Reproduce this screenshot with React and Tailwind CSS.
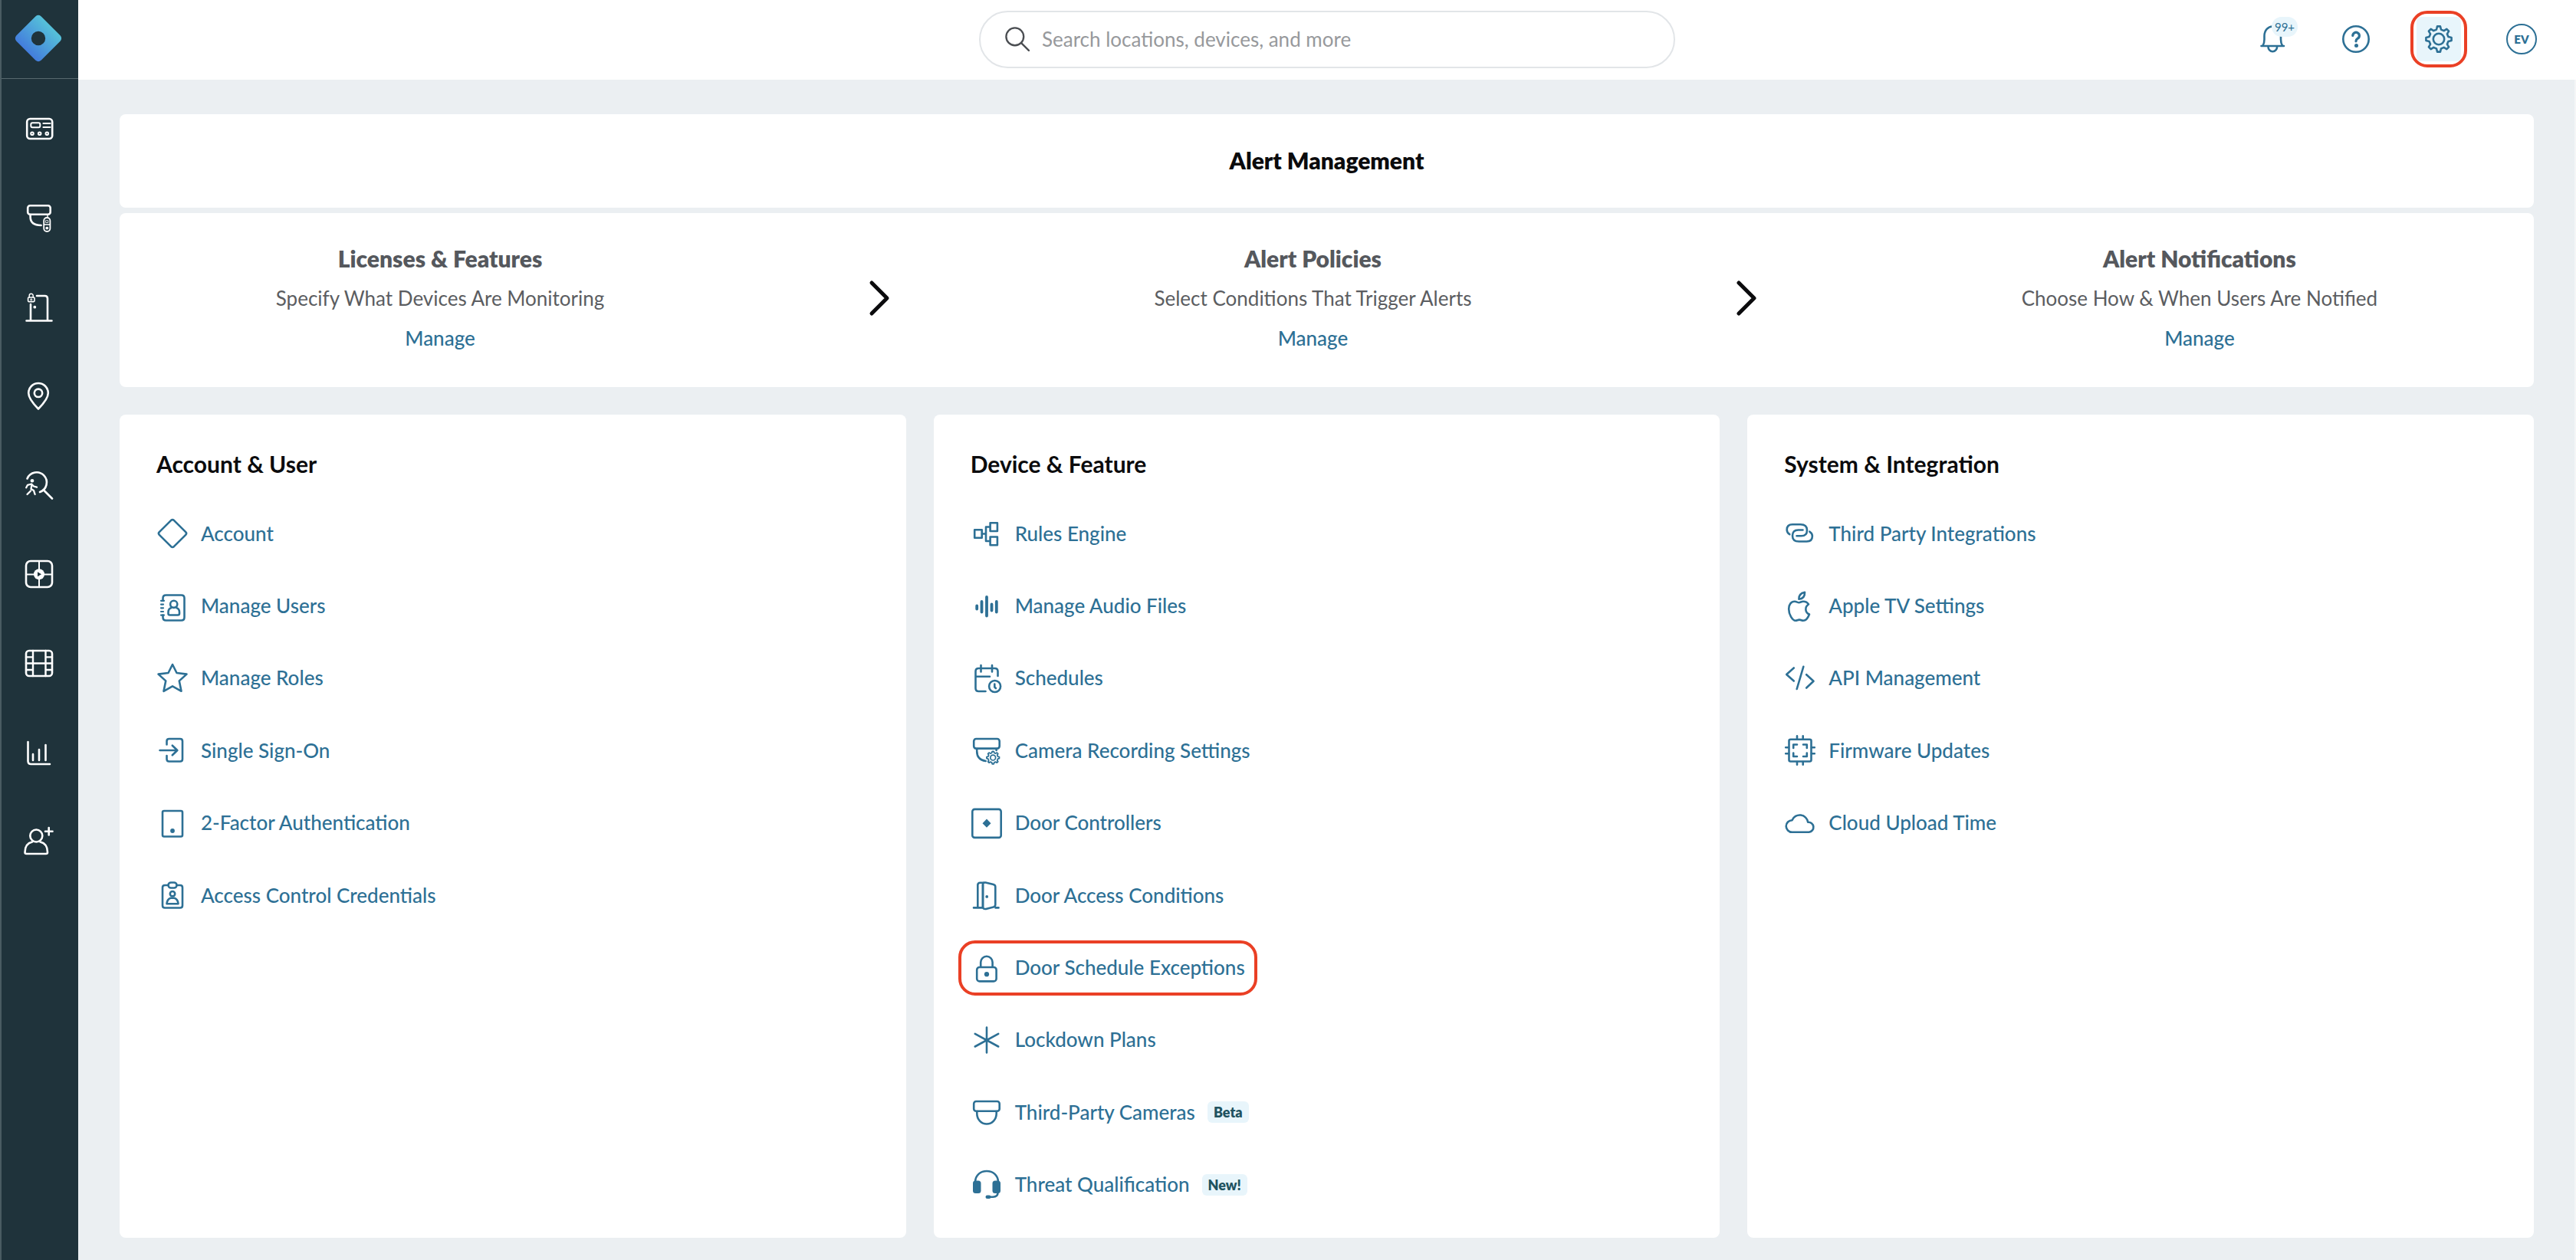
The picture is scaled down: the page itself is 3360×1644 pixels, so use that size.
import clsx from 'clsx'

// Closed outline of a toothed wheel centred on cx, cy
const gearPath = (cx, cy, outer, inner, teeth = 8) => {
  const step = 360 / teeth
  const points = []
  for (let i = 0; i < teeth; i++) {
    const mid = i * step - 90
    const corners = [
      [mid - step * 0.3, inner],
      [mid - step * 0.15, outer],
      [mid + step * 0.15, outer],
      [mid + step * 0.3, inner],
    ]
    corners.forEach(([deg, r]) => {
      const rad = (deg * Math.PI) / 180
      points.push(`${(cx + r * Math.cos(rad)).toFixed(2)} ${(cy + r * Math.sin(rad)).toFixed(2)}`)
    })
  }
  return `M${points.join('L')}Z`
}

const icons = {
  // sidebar
  dashboard: (
    <>
      <rect x="4.2" y="7" width="33" height="26" rx="4" />
      <rect x="9.3" y="12.3" width="12" height="6" rx="2" strokeWidth="2" />
      <path d="M25.5 13h9M25.5 18h9" strokeWidth="2.2" />
      <circle cx="11" cy="26.3" r="1.8" strokeWidth="2" />
      <circle cx="20.7" cy="26.3" r="1.8" strokeWidth="2" />
      <circle cx="30.3" cy="26.3" r="1.8" strokeWidth="2" />
    </>
  ),
  camerasNav: (
    <>
      <rect x="5.2" y="4.2" width="29.5" height="11.6" rx="3" />
      <path d="M8.6 16v3c0 7 5 11 14 11" />
      <rect x="26.2" y="20" width="8.2" height="18" rx="4" strokeWidth="1.8" />
      <path d="M26.5 29h7.6M31 16.5v2.5" strokeWidth="1.4" />
      <rect x="29" y="23.7" width="2.8" height="2.8" strokeWidth="0.8" />
      <circle cx="30.3" cy="33.6" r="1.9" fill="currentColor" stroke="none" />
    </>
  ),
  doorsNav: (
    <>
      <rect x="5.6" y="8" width="8.4" height="5.6" rx="1" strokeWidth="1.6" />
      <path d="M7.2 8V5.7a2.3 2.3 0 0 1 5 0V8" strokeWidth="1.5" />
      <path d="M9.8 9.6v2.6M8.5 10.9h2.6" strokeWidth="1" />
      <path d="M17 6h10.5q3.5 0 3.5 3.5V38.5M9 17v21.5M3.5 38.5h33" />
      <circle cx="14.3" cy="20.7" r="1.9" fill="currentColor" stroke="none" />
    </>
  ),
  pin: (
    <>
      <path d="M19 37.5C14.5 33 6.2 24.5 6.2 16.8a12.8 12.8 0 0 1 25.6 0C31.8 24.5 23.5 33 19 37.5Z" />
      <circle cx="19" cy="16.8" r="5.2" />
    </>
  ),
  personSearch: (
    <>
      <path d="M4.5 12.5a13.2 13.2 0 1 1 16.5 17.5q3-.5 5-3.5" />
      <path d="M26 27.5L37 38.5" />
      <circle cx="11" cy="15.2" r="2.3" fill="currentColor" stroke="none" />
      <path d="M10.5 20L9.5 26M3.2 24.2L5 20.8L10 19.5L13 22.5L17 23.6M9.5 26L13 28L14.6 33M9 28.5L4.5 33" strokeWidth="2.3" />
    </>
  ),
  videoGrid: (
    <>
      <rect x="3" y="4" width="34" height="34" rx="6" />
      <path d="M20 4v34M3 21.5h34" strokeWidth="2" />
      <circle cx="20" cy="21.2" r="7" fill="currentColor" stroke="none" />
      <path d="M18 18.2v6l5-3Z" fill="#1f333b" stroke="none" />
    </>
  ),
  film: (
    <>
      <rect x="3" y="5" width="34" height="33" rx="4" />
      <path d="M12 5v33M28.5 5v33M3 21.5h34M3 13.4h9M3 30h9M28.5 13.4H37M28.5 30H37" strokeWidth="2.4" />
    </>
  ),
  chart: <path d="M5.5 8v25q0 4 4 4h24.5M12 24v8M20 18v14M28.5 12v20" />,
  addUser: (
    <>
      <circle cx="16.3" cy="14.5" r="8" />
      <path d="M11 22.6C5 24 1.5 28.5 1.5 36q0 2 2 2h25.5q2 0 2-2c0-7.5-3.5-12-9.5-13.4M32.7 4v9.5M28 8.8h9.5" />
    </>
  ),

  // header
  search: (
    <>
      <circle cx="12" cy="12" r="10.7" />
      <path d="M19.8 19.8L29 29" />
    </>
  ),
  bell: (
    <>
      <path d="M4.5 29h29.5M6.5 28.5q2-3 2-8v-4.5C8.5 8.5 13.5 3.5 19.3 3.5S30 8.5 30 16v4.5q0 5 2 8" />
      <path d="M13.5 30a5.8 6.3 0 0 0 11.6 0" />
    </>
  ),
  help: (
    <>
      <circle cx="20" cy="20" r="16.7" />
      <path d="M15.8 15.5a4.3 4.3 0 1 1 6.5 3.7q-2.3 1.5-2.3 3.6" strokeWidth="3.2" />
      <circle cx="20.5" cy="28.6" r="2.5" fill="currentColor" stroke="none" />
    </>
  ),
  gear: (
    <>
      <path d={gearPath(20, 20, 16.7, 12.8)} />
      <circle cx="20" cy="20" r="7.2" />
    </>
  ),

  // account & user
  diamond: <path d="M19.2 2.8q1.8-1.5 3.6 0L38.2 18.2q1.8 1.8 0 3.6L22.8 37.2q-1.8 1.5-3.6 0L3.8 21.8q-1.8-1.8 0-3.6Z" />,
  userBook: (
    <>
      <path d="M8.5 12.5V9.5q0-4 4-4H32.5q4 0 4 4V34.5q0 4-4 4H12.5q-4 0-4-4V31.5" />
      <path d="M6 12.8h4M6 17.6h3M6 22.3h3M6 27h3M6 31.6h4" strokeWidth="2.2" />
      <circle cx="22.7" cy="17.3" r="4.6" />
      <path d="M19 22.3q-3.5 1.2-3.5 5.5v1.7q0 2 2 2h10.5q2 0 2-2V27.8q0-4.3-3.5-5.5" />
    </>
  ),
  star: <path d="M21 2L26.5 13L39.5 14.6L29.8 23.4L32.5 36.8L21 30.4L9.5 36.8L12.2 23.4L2.5 14.6L15.5 13Z" />,
  signIn: <path d="M13.5 12.5V8q0-3 3-3H31q3 0 3 3V31.5q0 3-3 3H16.5q-3 0-3-3V27M4.5 20H27M20.8 13.7L27.3 20L20.8 26.3" />,
  tablet: (
    <>
      <rect x="8" y="4" width="26" height="33.5" rx="2" />
      <circle cx="21" cy="30" r="2.9" fill="currentColor" stroke="none" />
    </>
  ),
  idBadge: (
    <>
      <path d="M14.5 7H11q-3 0-3 3V33.5q0 3 3 3H31q3 0 3-3V10q0-3-3-3H27.5" />
      <rect x="15.5" y="3.5" width="11" height="7" rx="3.5" />
      <circle cx="21" cy="18.2" r="3.2" />
      <path d="M13.5 31.2q.5-6 5-7.5h5q4.5 1.5 5 7.5Z" />
    </>
  ),

  // device & feature
  rules: (
    <>
      <rect x="5.2" y="15.2" width="9.5" height="10.5" />
      <rect x="25.6" y="6.2" width="9.3" height="10.8" />
      <rect x="25.6" y="24.5" width="9.3" height="10.8" />
      <path d="M15 20.5h5M25 11.5h-5v18.5h5" />
    </>
  ),
  audio: <path d="M8.2 19.5v4M14.5 14v13.5M21 8v24.5M27.5 17.5v8M33.8 14v13.5" strokeWidth="3.8" />,
  schedule: (
    <>
      <path d="M19.5 37H10.5q-4 0-4-4V11q0-4 4-4H31.5q4 0 4 4v6M13.5 3v8.5M28 3v8.5M7 17.8H25" />
      <circle cx="31.6" cy="30.5" r="7.5" />
      <path d="M31.3 27.5v4l1.6 1.5" />
    </>
  ),
  cameraGear: (
    <>
      <rect x="4.2" y="5" width="33.5" height="12.6" rx="3" />
      <path d="M8.2 18v3c0 7.5 4 12 11.5 13M33.6 18v2" />
      <path d={gearPath(29.2, 29.6, 8.3, 6.5)} strokeWidth="1.8" />
      <circle cx="29.2" cy="29.6" r="3.4" strokeWidth="1.7" />
    </>
  ),
  controller: (
    <>
      <rect x="2.3" y="1.9" width="37.4" height="37" rx="3" />
      <path d="M21 14.6L26.5 20.2L21 25.8L15.5 20.2Z" fill="currentColor" stroke="none" />
    </>
  ),
  doorOpen: (
    <>
      <path d="M4 36.4h11.5M32.5 36.4h4M9.3 36V6.8q0-3 3-3h5M16 36.4V6" />
      <path d="M16 6q0-3 3.5-2.5L29.8 6q2.5.7 2.5 3V32.5q0 2.3-2.5 3L20 38q-4 .5-4-3Z" />
      <circle cx="21.2" cy="21.9" r="1.9" fill="currentColor" stroke="none" />
    </>
  ),
  lock: (
    <>
      <rect x="8.2" y="19" width="25.4" height="18.4" rx="3.5" />
      <path d="M13.2 18.5v-6a7.7 7.7 0 0 1 15.4 0v6" />
      <circle cx="21" cy="28.2" r="3.1" fill="currentColor" stroke="none" />
    </>
  ),
  asterisk: <path d="M21 3.5v33M5.8 11.8L36.2 28.5M36.2 11.8L5.8 28.5" />,
  camera: (
    <>
      <rect x="4.2" y="6" width="33.5" height="12.8" rx="3" />
      <path d="M8.3 19v3a12.7 13.5 0 0 0 25.4 0v-3" />
    </>
  ),
  headset: (
    <>
      <path d="M6 16C6.5 7 13 2 21 2S35.5 7 36 16" />
      <rect x="3" y="14.5" width="10.5" height="16.5" rx="3.5" fill="currentColor" stroke="none" />
      <rect x="28.5" y="14.5" width="10.5" height="16.5" rx="3.5" fill="currentColor" stroke="none" />
      <path d="M35.6 29.5q0 6.2-6.5 6.2H25" />
      <rect x="19.5" y="33.4" width="7" height="4.7" rx="2.3" fill="currentColor" stroke="none" />
    </>
  ),

  // system & integration
  link: (
    <>
      <path d="M7.3 21.2Q3.7 19 3.7 15.2Q3.7 8.3 11 8.3H21.5Q30 8.3 30 15.7Q30 23.3 22.5 23.3H16.5" />
      <path d="M33.3 17.6Q36.9 19.8 36.9 23.6Q36.9 30.5 29.6 30.5H19.5Q11 30.5 11 23.1Q11 15.5 18.5 15.5H24.5" />
    </>
  ),
  apple: (
    <>
      <path d="M27 1.8Q19 3.5 19.4 10.8Q27.2 10.5 27 1.8Z" />
      <path d="M32 17.5C30.3 14.8 27.5 13.8 25 13.8C22.5 13.8 21.5 15.2 19.5 15.2C17.5 15.2 16.5 13.8 13.7 13.8C9.5 13.8 6.2 17.5 6.2 23.5C6.2 31 11 38.8 15 38.8C17 38.8 17.8 37.6 20 37.6C22.2 37.6 23 38.8 25 38.8C28.5 38.8 31.5 34.5 33 30.5C27.5 28.5 26.5 21 32 17.5Z" />
    </>
  ),
  code: <path d="M12.8 6.5L3.2 15L12.8 23.5M25.3 4.8L16.7 34M29.2 15.2L38.5 23.8L29.2 32.5" />,
  chip: (
    <>
      <rect x="6.5" y="5.7" width="29" height="28.8" rx="2" />
      <path d="M17 1.2V5M24.7 1.2V5M17 35v3.8M24.7 35v3.8M2.2 16.2H6M2.2 24.2H6M36 16.2h3.8M36 24.2h3.8" />
      <path d="M12.2 17v-4.5H17M25 12.5h4.8V17M29.8 23.5V28H25M17 28h-4.8V23.5" />
    </>
  ),
  cloud: <path d="M10.5 31.8A7.8 7.8 0 0 1 10.5 16.2A10.8 10.8 0 0 1 31.2 18.8A6.5 6.5 0 0 1 32.5 31.8Z" />,
}

function Icon({ name, viewBox = '0 0 40 40', className = 'size-10', stroke = 2.6 }) {
  return (
    <svg
      viewBox={viewBox}
      className={clsx('shrink-0', className)}
      fill="none"
      stroke="currentColor"
      strokeWidth={stroke}
      strokeLinecap="round"
      strokeLinejoin="round"
      aria-hidden="true"
    >
      {icons[name]}
    </svg>
  )
}

const navItems = [
  { icon: 'dashboard', label: 'Dashboard' },
  { icon: 'camerasNav', label: 'Devices' },
  { icon: 'doorsNav', label: 'Doors' },
  { icon: 'pin', label: 'Locations' },
  { icon: 'personSearch', label: 'People search' },
  { icon: 'videoGrid', label: 'Video walls' },
  { icon: 'film', label: 'Archives' },
  { icon: 'chart', label: 'Reports' },
  { icon: 'addUser', label: 'Add user' },
]

const steps = [
  { title: 'Licenses & Features', text: 'Specify What Devices Are Monitoring' },
  { title: 'Alert Policies', text: 'Select Conditions That Trigger Alerts' },
  { title: 'Alert Notifications', text: 'Choose How & When Users Are Notified' },
]

const sections = [
  {
    title: 'Account & User',
    items: [
      { icon: 'diamond', label: 'Account' },
      { icon: 'userBook', label: 'Manage Users' },
      { icon: 'star', label: 'Manage Roles' },
      { icon: 'signIn', label: 'Single Sign-On' },
      { icon: 'tablet', label: '2-Factor Authentication' },
      { icon: 'idBadge', label: 'Access Control Credentials' },
    ],
  },
  {
    title: 'Device & Feature',
    items: [
      { icon: 'rules', label: 'Rules Engine' },
      { icon: 'audio', label: 'Manage Audio Files' },
      { icon: 'schedule', label: 'Schedules' },
      { icon: 'cameraGear', label: 'Camera Recording Settings' },
      { icon: 'controller', label: 'Door Controllers' },
      { icon: 'doorOpen', label: 'Door Access Conditions' },
      { icon: 'lock', label: 'Door Schedule Exceptions', highlighted: true },
      { icon: 'asterisk', label: 'Lockdown Plans' },
      { icon: 'camera', label: 'Third-Party Cameras', tag: 'Beta' },
      { icon: 'headset', label: 'Threat Qualification', tag: 'New!' },
    ],
  },
  {
    title: 'System & Integration',
    items: [
      { icon: 'link', label: 'Third Party Integrations' },
      { icon: 'apple', label: 'Apple TV Settings' },
      { icon: 'code', label: 'API Management' },
      { icon: 'chip', label: 'Firmware Updates' },
      { icon: 'cloud', label: 'Cloud Upload Time' },
    ],
  },
]

function Sidebar() {
  return (
    <aside className="flex w-[102px] shrink-0 flex-col border-l-2 border-[#4a5c62] bg-[#1f333b] text-white">
      <a href="#home" aria-label="Home" className="flex h-[103px] items-center justify-center border-b border-[#57686e] pr-1 pb-0.5">
        <svg viewBox="0 0 62 62" className="size-[62px]" aria-hidden="true">
          <defs>
            <linearGradient id="logo" x1="0.2" y1="0.8" x2="0.75" y2="0.25">
              <stop offset="0" stopColor="#4279dd" />
              <stop offset="1" stopColor="#55bfd9" />
            </linearGradient>
          </defs>
          <path
            fill="url(#logo)"
            fillRule="evenodd"
            d="M27.5 2.2Q31 -.5 34.5 2.2L59.8 27.5Q62.5 31 59.8 34.5L34.5 59.8Q31 62.5 27.5 59.8L2.2 34.5Q-.5 31 2.2 27.5ZM31 21.8a9.2 9.2 0 1 0 0 18.4a9.2 9.2 0 1 0 0-18.4Z"
          />
        </svg>
      </a>
      <nav className="flex flex-col pt-[7px] pr-0.5">
        {navItems.map((item) => (
          <a key={item.icon} href="#nav" aria-label={item.label} className="flex h-[116px] items-center justify-center">
            <Icon name={item.icon} />
          </a>
        ))}
      </nav>
    </aside>
  )
}

function Header() {
  return (
    <header className="grid h-26 grid-cols-[1fr_minmax(0,908px)_1fr] items-center bg-white pb-0.5">
      <label className="col-start-2 flex h-[75px] items-center gap-4 rounded-full border-2 border-[#e2e5e8] px-8">
        <Icon name="search" viewBox="0 0 30 30" className="size-8 text-[#4b4e52]" stroke={2.2} />
        <input
          type="search"
          aria-label="Search"
          placeholder="Search locations, devices, and more"
          className="w-full bg-transparent text-[26px] text-[#4b4e52] outline-none placeholder:text-[#97999c]"
        />
      </label>
      <div className="flex items-center justify-end gap-[50px] pr-[42px] text-[#2d7095]">
        <button type="button" aria-label="Notifications" className="relative flex size-[58px] items-center justify-center">
          <Icon name="bell" />
          <span className="absolute top-0 left-[27px] flex h-[26px] w-[34px] items-center justify-center rounded-full bg-[#e8f5fb] text-[15px]">
            99+
          </span>
        </button>
        <button type="button" aria-label="Help" className="flex size-[58px] items-center justify-center">
          <Icon name="help" />
        </button>
        <button type="button" aria-label="Settings" className="relative flex size-[58px] items-center justify-center rounded-md bg-[#e8f5fb]">
          <Icon name="gear" />
          <span className="absolute -inset-2 rounded-[22px] border-4 border-[#ea4025]" />
        </button>
        <button type="button" aria-label="Profile" className="flex size-[58px] items-center justify-center">
          <span className="flex size-10 items-center justify-center rounded-full border-2 border-[#2d7095] text-[15px] font-extrabold">EV</span>
        </button>
      </div>
    </header>
  )
}

function AlertSteps() {
  return (
    <section className="flex items-center justify-around rounded-lg bg-white px-[34px] pt-[33px] pb-[38px]">
      {steps.map((step, index) => (
        <div key={step.title} className="contents">
          {index > 0 && (
            <svg viewBox="0 0 38 52" className="h-[52px] w-[38px] shrink-0" fill="none" stroke="#0b0b0d" strokeWidth="5" strokeLinecap="round" strokeLinejoin="round" aria-hidden="true">
              <path d="M9 6L29 26L9 46" />
            </svg>
          )}
          <div className="flex flex-col items-center leading-[52px]">
            <h2 className="text-[30px] font-extrabold text-[#55585d]">{step.title}</h2>
            <p className="text-[26px] text-[#5b5d61]">{step.text}</p>
            <a href="#manage" className="text-[26px] font-medium text-[#2d7095]">
              Manage
            </a>
          </div>
        </div>
      ))}
    </section>
  )
}

function SettingsLink({ item }) {
  return (
    <a href="#settings" className="relative flex items-center gap-4 text-[26px] font-medium text-[#2d7095]">
      <Icon name={item.icon} viewBox="0 -1 42 42" className="size-[42px]" />
      {item.label}
      {item.tag && (
        <span className="rounded-md bg-[#e8f5fb] px-2 text-[18px] leading-7 font-extrabold text-[#20525f]">{item.tag}</span>
      )}
      {item.highlighted && (
        <span className="absolute -inset-x-4 -inset-y-[15px] rounded-[22px] border-4 border-[#ea4025]" />
      )}
    </a>
  )
}

function SettingsCard({ section }) {
  return (
    <section className="flex flex-col rounded-lg bg-white px-12 pt-10 pb-[22px]">
      <h2 className="mb-5 text-[30px] leading-[48px] font-bold text-[#0b0b0d]">{section.title}</h2>
      <ul className="grid flex-1 grid-rows-10">
        {section.items.map((item) => (
          <li key={item.label} className="flex items-center">
            <SettingsLink item={item} />
          </li>
        ))}
      </ul>
    </section>
  )
}

export default function App() {
  return (
    <div className="flex min-h-screen bg-[#ebeff2] font-[Lato,'Open_Sans',sans-serif]">
      <Sidebar />
      <div className="flex min-w-0 flex-1 flex-col">
        <Header />
        <main className="flex flex-1 flex-col border-r-2 border-[#f4f6f7] pt-[45px] pr-[53px] pb-[29px] pl-[54px]">
          <h1 className="mb-[7px] rounded-lg bg-white pb-0.5 text-center text-[30px] leading-[120px] font-extrabold text-[#0b0b0d]">
            Alert Management
          </h1>
          <AlertSteps />
          <div className="mt-9 grid flex-1 grid-cols-3 gap-9">
            {sections.map((section) => (
              <SettingsCard key={section.title} section={section} />
            ))}
          </div>
        </main>
      </div>
    </div>
  )
}
